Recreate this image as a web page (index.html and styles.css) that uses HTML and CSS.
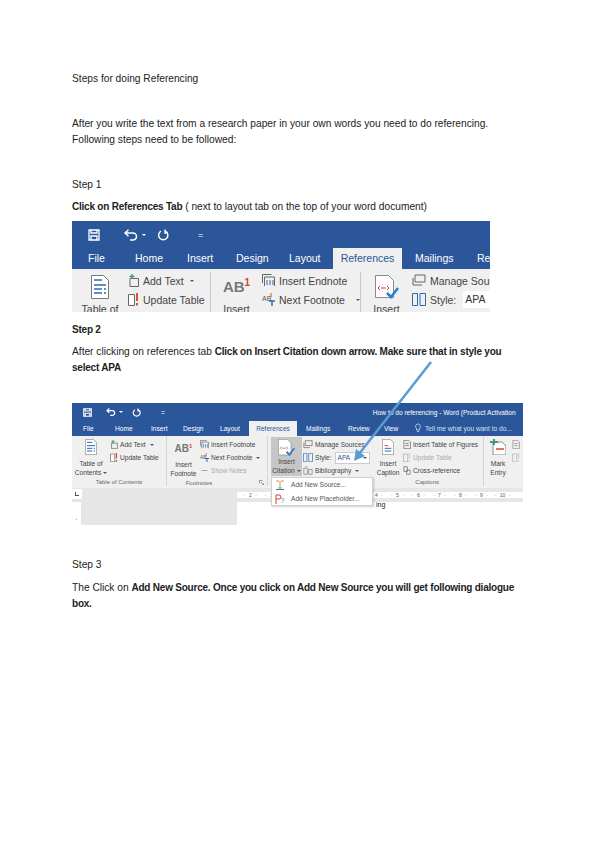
FILE: index.html
```html
<!DOCTYPE html>
<html lang="en">
<head>
    <meta charset="UTF-8">
    <meta name="viewport" content="width=device-width, initial-scale=1.0">
    <title>Steps for doing Referencing</title>
    <link rel="stylesheet" href="styles.css">
</head>
<body>
    <main class="page">
        <p>Steps for doing Referencing</p>
        <p class="after-gap">After you write the text from a research paper in your own words you need to do referencing.<br>Following steps need to be followed:</p>
        <p class="after-gap">Step 1</p>
        <p class="after-step"><b>Click on References Tab</b> ( next to layout tab on the top of your word document)</p>

        <div class="word word-large">
            <div class="qat">
                <svg class="qat-save" width="12" height="12" viewBox="0 0 12 12"><path d="M1 1h10v10H1z M3 1v3h6V1 M3 11V7h6v4" fill="none" stroke="#fff" stroke-width="1.3"/></svg>
                <svg class="qat-undo" width="14" height="12" viewBox="0 0 14 12"><path d="M1 4h8a3.5 3.5 0 0 1 0 7H6 M4.5 .8L1 4l3.5 3.2" fill="none" stroke="#fff" stroke-width="1.5"/></svg>
                <span class="caret caret-white"></span>
                <svg class="qat-redo" width="12" height="12" viewBox="0 0 12 12"><path d="M4 2.2a4.6 4.6 0 1 0 4.5 0 M8 .5v3.5h3" fill="none" stroke="#fff" stroke-width="1.4"/></svg>
                <span class="qat-more">=</span>
            </div>
            <div class="tabs">
                <span class="tab">File</span>
                <span class="tab">Home</span>
                <span class="tab">Insert</span>
                <span class="tab">Design</span>
                <span class="tab">Layout</span>
                <span class="tab tab-active">References</span>
                <span class="tab tab-after">Mailings</span>
                <span class="tab">Rev</span>
            </div>
            <div class="ribbon">
                <div class="group group-toc">
                    <div class="big-button big-toc">
                        <svg width="18" height="24" viewBox="0 0 18 24"><path d="M.5.5h12l5 5v18H.5z" fill="#fff" stroke="#777"/><path d="M3 5h8M3 10h12M3 14h8M13 14h2M3 18h8M13 18h2" stroke="#2b6cb0" stroke-width="1.5"/></svg>
                        <span>Table of</span>
                    </div>
                    <div class="small-list">
                        <span class="small-item"><svg width="11" height="13" viewBox="0 0 11 13"><path d="M2 4.5h8.500v8H2z" fill="none" stroke="#666"/><path d="M4 0v5M1.500 2.500h5" stroke="#3f9b80" stroke-width="1.500"/></svg>Add Text<i class="caret"></i></span>
                        <span class="small-item"><svg width="11" height="13" viewBox="0 0 11 13"><path d="M.5 1.500h6v11h-6z" fill="#fff" stroke="#666"/><path d="M9 0v8M9 10v2.500" stroke="#d24726" stroke-width="1.800"/></svg>Update Table</span>
                    </div>
                </div>
                <div class="group group-foot">
                    <div class="big-button big-ab">
                        <span class="ab">AB<sup>1</sup></span>
                        <span>Insert</span>
                    </div>
                    <div class="small-list">
                        <span class="small-item"><svg width="13" height="13" viewBox="0 0 13 13"><path d="M.5 9V.5h9M2.500 12V3h10v9" fill="none" stroke="#666"/><path d="M5 6v5M8 6v5M11 6v5" stroke="#2b6cb0"/></svg>Insert Endnote</span>
                        <span class="small-item"><svg width="13" height="13" viewBox="0 0 13 13"><path d="M7 8h6M10 8v5" stroke="#2b6cb0" stroke-width="1.500"/><path d="M9 0v4" stroke="#d24726"/><text x="0" y="8" font-size="7" fill="#555">AB</text></svg>Next Footnote<i class="caret caret-far"></i></span>
                    </div>
                </div>
                <div class="group group-cite">
                    <div class="big-button big-cite">
                        <svg width="24" height="24" viewBox="0 0 24 24"><path d="M.5.5h13l5 5v17H.5z" fill="#fff" stroke="#888"/><path d="M5 11l-2 2 2 2M12 11l2 2-2 2M6 13h5" fill="none" stroke="#d24726"/><path d="M12 18l4 4 7-9" fill="none" stroke="#2b7cd3" stroke-width="2.500"/></svg>
                        <span>Insert</span>
                    </div>
                    <div class="small-list">
                        <span class="small-item"><svg width="14" height="13" viewBox="0 0 14 13"><path d="M3 1h10v7H3zM1 4v7h9" fill="none" stroke="#666"/></svg>Manage Sources</span>
                        <span class="small-item"><svg width="14" height="13" viewBox="0 0 14 13"><path d="M.5.500h5v12h-5zM8 .500h5.500v12H8z" fill="none" stroke="#2b6cb0"/></svg>Style:<span class="style-box">APA</span></span>
                    </div>
                </div>
            </div>
        </div>

        <p class="step-bold"><b>Step 2</b></p>
        <p class="after-step">After clicking on references tab <b>Click on Insert Citation down arrow. Make sure that in style you<br>select APA</b></p>

        <div class="word word-small">
            <div class="qat">
                <svg class="qat-save" width="9" height="9" viewBox="0 0 12 12"><path d="M1 1h10v10H1z M3 1v3h6V1 M3 11V7h6v4" fill="none" stroke="#fff" stroke-width="1.500"/></svg>
                <svg class="qat-undo" width="10" height="8" viewBox="0 0 14 12"><path d="M1 4h8a3.500 3.500 0 0 1 0 7H6 M4.500 .8L1 4l3.500 3.200" fill="none" stroke="#fff" stroke-width="1.800"/></svg>
                <span class="caret caret-white"></span>
                <svg class="qat-redo" width="9" height="9" viewBox="0 0 12 12"><path d="M4 2.200a4.600 4.600 0 1 0 4.500 0 M8 .5v3.500h3" fill="none" stroke="#fff" stroke-width="1.600"/></svg>
                <span class="qat-more">=</span>
                <span class="doc-title">How to do referencing - Word (Product Activation</span>
            </div>
            <div class="tabs">
                <span class="tab">File</span>
                <span class="tab">Home</span>
                <span class="tab">Insert</span>
                <span class="tab">Design</span>
                <span class="tab">Layout</span>
                <span class="tab tab-active">References</span>
                <span class="tab tab-after">Mailings</span>
                <span class="tab">Review</span>
                <span class="tab">View</span>
                <span class="tab tab-tell"><svg width="6" height="9" viewBox="0 0 6 9"><path d="M1.500 5.500a2.500 2.500 0 1 1 3 0V7h-3zM2 8.500h2" fill="none" stroke="#cfe0f5" stroke-width=".8"/></svg>Tell me what you want to do...</span>
            </div>
            <div class="ribbon">
                <div class="group group-toc">
                    <div class="group-items">
                        <div class="big-button big-toc">
                            <svg width="12" height="16" viewBox="0 0 18 24"><path d="M.5.5h12l5 5v18H.5z" fill="#fff" stroke="#777"/><path d="M3 5h8M3 10h12M3 14h8M13 14h2M3 18h8M13 18h2" stroke="#2b6cb0" stroke-width="1.500"/></svg>
                            <span>Table of<br>Contents<i class="caret"></i></span>
                        </div>
                        <div class="small-list">
                            <span class="small-item"><svg width="8" height="9" viewBox="0 0 11 13"><path d="M2 4.500h8.500v8H2z" fill="none" stroke="#666"/><path d="M4 0v5M1.500 2.500h5" stroke="#3f9b80" stroke-width="1.500"/></svg>Add Text<i class="caret"></i></span>
                            <span class="small-item"><svg width="8" height="9" viewBox="0 0 11 13"><path d="M.5 1.500h6v11h-6z" fill="#fff" stroke="#666"/><path d="M9 0v8M9 10v2.500" stroke="#d24726" stroke-width="1.800"/></svg>Update Table</span>
                        </div>
                    </div>
                    <span class="group-label">Table of Contents</span>
                </div>
                <div class="group group-foot">
                    <div class="group-items">
                        <div class="big-button big-ab">
                            <span class="ab">AB<sup>1</sup></span>
                            <span>Insert<br>Footnote</span>
                        </div>
                        <div class="small-list">
                            <span class="small-item"><svg width="9" height="9" viewBox="0 0 13 13"><path d="M.5 9V.5h9M2.500 12V3h10v9" fill="none" stroke="#666"/><path d="M5 6v5M8 6v5M11 6v5" stroke="#2b6cb0"/></svg>Insert Footnote</span>
                            <span class="small-item"><svg width="9" height="9" viewBox="0 0 13 13"><path d="M7 8h6M10 8v5" stroke="#2b6cb0" stroke-width="1.500"/><path d="M9 0v4" stroke="#d24726"/><text x="0" y="8" font-size="7" fill="#555">AB</text></svg>Next Footnote<i class="caret"></i></span>
                            <span class="small-item item-off"><svg width="9" height="9" viewBox="0 0 13 13"><path d="M2 6.500h9" stroke="#aaa" stroke-width="1.500"/></svg>Show Notes</span>
                        </div>
                    </div>
                    <span class="group-label label-foot">Footnotes<svg class="launcher" width="5" height="5" viewBox="0 0 5 5"><path d="M.5 .5h3M.5 .5v3M2 2l3 3M5 3v2H3" fill="none" stroke="#777" stroke-width=".7"/></svg></span>
                </div>
                <div class="group group-cite">
                    <div class="group-items">
                        <div class="big-button big-cite">
                            <svg width="17" height="17" viewBox="0 0 24 24"><path d="M.5.5h13l5 5v17H.5z" fill="#fff" stroke="#888"/><path d="M5 11l-2 2 2 2M12 11l2 2-2 2M6 13h5" fill="none" stroke="#d24726"/><path d="M12 18l4 4 7-9" fill="none" stroke="#2b7cd3" stroke-width="2.500"/></svg>
                            <span>Insert<br>Citation<i class="caret"></i></span>
                        </div>
                        <div class="small-list list-sources">
                            <span class="small-item"><svg width="10" height="9" viewBox="0 0 14 13"><path d="M3 1h10v7H3zM1 4v7h9" fill="none" stroke="#666"/></svg>Manage Sources</span>
                            <span class="small-item"><svg width="10" height="9" viewBox="0 0 14 13"><path d="M.5.500h5v12h-5zM8 .500h5.500v12H8z" fill="none" stroke="#2b6cb0"/></svg>Style:<span class="style-box">APA<i class="caret"></i></span></span>
                            <span class="small-item"><svg width="10" height="9" viewBox="0 0 14 13"><path d="M1 3h5v9H1zM8 5h5v7H8z" fill="none" stroke="#777"/><path d="M3 1h3" stroke="#c89b3c"/></svg>Bibliography<i class="caret"></i></span>
                        </div>
                        <div class="big-button big-caption">
                            <svg width="12" height="16" viewBox="0 0 18 24"><path d="M.5.5h12l5 5v18H.5z" fill="#fff" stroke="#777"/><path d="M4 14h10M4 18h10" stroke="#2b6cb0" stroke-width="1.500"/><path d="M4 10h5" stroke="#d24726" stroke-width="1.500"/></svg>
                            <span>Insert<br>Caption</span>
                        </div>
                        <div class="small-list">
                            <span class="small-item"><svg width="8" height="9" viewBox="0 0 11 13"><path d="M1 .5h7l2.500 2.500v9.500H1z" fill="none" stroke="#666"/><path d="M3 5h5M3 8h5" stroke="#666"/></svg>Insert Table of Figures</span>
                            <span class="small-item item-off"><svg width="8" height="9" viewBox="0 0 11 13"><path d="M.5 1.500h6v11h-6z" fill="none" stroke="#aaa"/><path d="M9 0v8M9 10v2.500" stroke="#ccc" stroke-width="1.800"/></svg>Update Table</span>
                            <span class="small-item"><svg width="8" height="9" viewBox="0 0 11 13"><path d="M1 1h5v7H1zM5 6h5v6H5z" fill="none" stroke="#666"/></svg>Cross-reference</span>
                        </div>
                    </div>
                    <span class="group-label label-captions">Captions</span>
                </div>
                <div class="group group-mark">
                    <div class="big-button big-mark">
                        <svg width="16" height="16" viewBox="0 0 16 16"><path d="M3 3h9l4 4v9H3z" fill="#fff" stroke="#888"/><path d="M0 3h8M4 0v6" stroke="#3f9b80" stroke-width="2"/><path d="M6 10h8" stroke="#d24726" stroke-width="1.500"/></svg>
                        <span>Mark<br>Entry</span>
                    </div>
                    <div class="mark-tools">
                        <svg width="8" height="9" viewBox="0 0 11 13"><path d="M1 .5h7l2.500 2.500v9.500H1z" fill="none" stroke="#888"/><path d="M3 5h5M3 8h5" stroke="#888"/></svg>
                        <svg width="8" height="9" viewBox="0 0 11 13"><path d="M.5 1.500h6v11h-6z" fill="none" stroke="#b9a7c9"/><path d="M9 0v8M9 10v2.500" stroke="#ccc" stroke-width="1.800"/></svg>
                    </div>
                </div>
            </div>
            <div class="ruler-row">
                <span class="ruler-corner"><i></i></span>
                <div class="ruler">
                    <span>&middot; 2 &middot;</span><span>&middot; 1 &middot;</span><span></span><span></span><span></span><span></span>
                    <span>&middot; 4 &middot;</span><span>&middot; 5 &middot;</span><span>&middot; 6 &middot;</span><span>&middot; 7 &middot;</span><span>&middot; 8 &middot;</span><span>&middot; 9 &middot;</span><span>&middot; 10 &middot;</span>
                </div>
            </div>
            <div class="doc-area">
                <span class="doc-margin">.</span>
                <span class="doc-grey"></span>
                <span class="doc-text">ing</span>
            </div>
            <div class="cite-menu">
                <span class="menu-item"><svg width="10" height="10" viewBox="0 0 10 10"><path d="M1 9.500h8" stroke="#2b7cd3"/><path d="M1 1h3M6 1h3M5 1v7M3 8h4" stroke="#c89b3c"/></svg>Add New Source...</span>
                <span class="menu-item"><svg width="10" height="10" viewBox="0 0 10 10"><path d="M1 10V1h3a2 2 0 0 1 0 4H1" fill="none" stroke="#d24726"/><text x="5.500" y="9" font-size="7" fill="#2b7cd3">?</text></svg>Add New Placeholder...</span>
            </div>
        </div>

        <p class="step-three">Step 3</p>
        <p class="step-three-text">The Click on <b>Add New Source. Once you click on Add New Source you will get following dialogue<br>box.</b></p>

        <svg class="callout-arrow" width="595" height="842" viewBox="0 0 595 842">
            <path d="M431 362L359 454" stroke="#5b9bd5" stroke-width="2.500"/>
            <path d="M354 461L356 449L365 456z" fill="#5b9bd5"/>
        </svg>
    </main>
</body>
</html>
```

FILE: styles.css
```css
* { box-sizing: border-box; margin: 0; padding: 0; }
body { font-family: "Liberation Sans", Arial, sans-serif; background-color: #fff; }
.page {
    position: relative;
    width: 595px;
    min-height: 842px;
    padding: 71px 72px 0;
    font-size: 10.2px;
    line-height: 16px;
    color: #222;
    white-space: nowrap;
}
.page b { font-size: 10px; letter-spacing: -0.22px; }
.after-gap { margin-top: 29px; }
.after-step { margin-top: 6px; }
.step-bold { margin-top: 10px; }
.step-three { margin-top: 32px; }
.step-three-text { margin-top: 7px; }
.callout-arrow { position: absolute; top: 0; left: 0; pointer-events: none; }

/* word screenshots */
.word { position: relative; overflow: hidden; color: #444; background-color: #fff; }
.word-large { width: 418px; height: 91px; margin-top: 6px; font-size: 10.5px; }
.word-small { width: 451px; height: 122px; margin-top: 27px; font-size: 6.6px; line-height: 9px; }

.qat, .tabs { background-color: #2b579a; color: #fff; }
.qat { display: flex; align-items: center; }
.word-large .qat { height: 27px; padding-left: 16px; }
.word-small .qat { height: 18px; padding-left: 11px; }
.word-large .qat-undo { margin-left: 24px; }
.word-large .qat-redo { margin-left: 11px; }
.word-large .qat .caret { margin-left: 4px; }
.word-large .qat-more { margin-left: 29px; font-size: 9px; }
.word-small .qat-undo { margin-left: 14px; }
.word-small .qat-redo { margin-left: 9px; }
.word-small .qat .caret { margin-left: 3px; }
.word-small .qat-more { margin-left: 20px; }
.doc-title { margin-left: 208px; }

.tabs { display: grid; }
.word-large .tabs { height: 21px; padding-left: 16px; line-height: 21px; grid-template-columns: 47px 52px 49px 53px 44px 69px 75px 1fr; }
.word-small .tabs { height: 15px; padding-left: 11px; line-height: 15px; grid-template-columns: 32px 36px 32px 37px 29px 48px 51px 36px 31px 1fr; }
.tab-active { background-color: #f0f0f0; color: #2b579a; text-align: center; }
.word-large .tab-after { padding-left: 13px; }
.word-small .tab-after { padding-left: 9px; }
.tab-tell { color: #cfe0f5; overflow: hidden; }
.tab-tell svg { margin-right: 4px; vertical-align: -1px; }

.ribbon { display: flex; background-color: #f0f0f0; overflow: hidden; }
.word-large .ribbon { height: 43px; }
.word-small .ribbon { height: 52px; }
.group { flex: none; }
.word-large .group { display: flex; height: 40px; margin-top: 3px; border-right: 1px solid #c8c8c8; }
.word-small .group { display: flex; flex-direction: column; height: 50px; border-right: 1px solid #d4d4d4; }
.group-items { display: flex; flex: 1; }
.group-label { height: 10px; text-align: center; color: #666; font-size: 6px; line-height: 10px; }
.label-foot { position: relative; padding-right: 36px; }
.launcher { position: absolute; right: 3px; top: 2px; }
.label-captions { text-align: right; padding-right: 44px; }

.big-button { display: flex; flex-direction: column; align-items: center; flex: none; text-align: center; }
.big-button svg { flex: none; }
.small-list { display: flex; flex-direction: column; }
.small-item { display: flex; align-items: center; }
.small-item svg { flex: none; }
.item-off { color: #aaa; }

/* large ribbon columns */
.word-large .group-toc { width: 139px; }
.word-large .group-foot { width: 150px; }
.word-large .group-cite { width: 129px; border-right: none; }
.word-large .big-button { width: 56px; gap: 4px; padding-top: 3px; line-height: 12px; }
.word-large .big-ab { width: 51px; gap: 9px; padding-top: 8px; }
.word-large .big-cite { width: 51px; }
.word-large .small-list { gap: 6px; padding-top: 2px; }
.word-large .small-item { gap: 4px; height: 13px; }
.word-large .ab { font-size: 15px; font-weight: bold; color: #777; line-height: 14px; }
.word-large .ab sup { color: #d24726; font-size: 10px; line-height: 0; }
.word-large .style-box { width: 34px; height: 17px; margin-left: 3px; padding-left: 2px; background-color: #fff; line-height: 17px; color: #333; }

/* small ribbon columns */
.word-small .group-toc { width: 95px; }
.word-small .group-foot { width: 101px; }
.word-small .group-cite { width: 216px; }
.word-small .group-mark { flex-direction: row; width: 39px; border-right: none; }
.word-small .big-button { gap: 4px; padding-top: 3px; }
.word-small .big-toc { width: 38px; }
.word-small .big-ab { width: 33px; gap: 6px; padding-top: 8px; }
.word-small .big-cite { width: 31px; height: 39px; margin: 1px 1px 0 3px; padding-top: 2px; background-color: #c6c6c6; gap: 1px; }
.word-small .big-caption { width: 30px; }
.word-small .big-mark { width: 28px; }
.word-small .small-list { gap: 4px; padding-top: 4px; }
.word-small .list-sources { width: 70px; }
.word-small .small-item { gap: 2px; height: 9px; }
.word-small .ab { font-size: 10px; font-weight: bold; color: #777; line-height: 10px; }
.word-small .ab sup { color: #d24726; font-size: 6px; line-height: 0; }
.word-small .style-box { display: flex; align-items: center; justify-content: space-between; width: 35px; height: 12px; margin-left: 1px; padding: 0 2px; background-color: #fff; border: 1px solid #ccc; color: #2b579a; }
.mark-tools { display: flex; flex-direction: column; gap: 4px; padding-top: 4px; }

.caret { display: inline-block; width: 0; height: 0; margin-left: 2px; border-left: 2px solid transparent; border-right: 2px solid transparent; border-top: 2px solid #555; vertical-align: middle; }
.caret-white { border-top-color: #fff; }
.caret-far { margin-left: 7px; }

/* ruler and document */
.ruler-row { display: flex; height: 14px; background-color: #e6e6e6; }
.ruler-corner { display: flex; align-items: center; justify-content: center; width: 10px; height: 10px; margin-top: 1px; background-color: #fff; }
.ruler-corner i { width: 4px; height: 4px; border-left: 1px solid #555; border-bottom: 1px solid #555; }
.ruler { display: flex; width: 286px; height: 6px; margin: 4px 0 0 155px; padding-left: 3px; background-color: #fff; font-size: 5px; line-height: 6px; color: #555; overflow: hidden; }
.ruler span { flex: none; width: 21px; text-align: center; word-spacing: 2px; }
.doc-area { display: flex; height: 23px; }
.doc-margin { width: 9px; padding-top: 11px; text-align: center; color: #333; }
.doc-grey { width: 156px; background-color: #e6e6e6; }
.doc-text { margin: -2px 0 0 139px; color: #222; font-size: 7px; }

.cite-menu {
    position: absolute;
    left: 199px;
    top: 74px;
    display: flex;
    flex-direction: column;
    justify-content: center;
    gap: 4px;
    width: 102px;
    height: 29px;
    padding-left: 3px;
    background-color: #fff;
    border: 1px solid #d0d0d0;
    box-shadow: 1px 1px 2px rgba(0, 0, 0, 0.2);
    color: #555;
}
.menu-item { display: flex; align-items: center; gap: 6px; }
```
